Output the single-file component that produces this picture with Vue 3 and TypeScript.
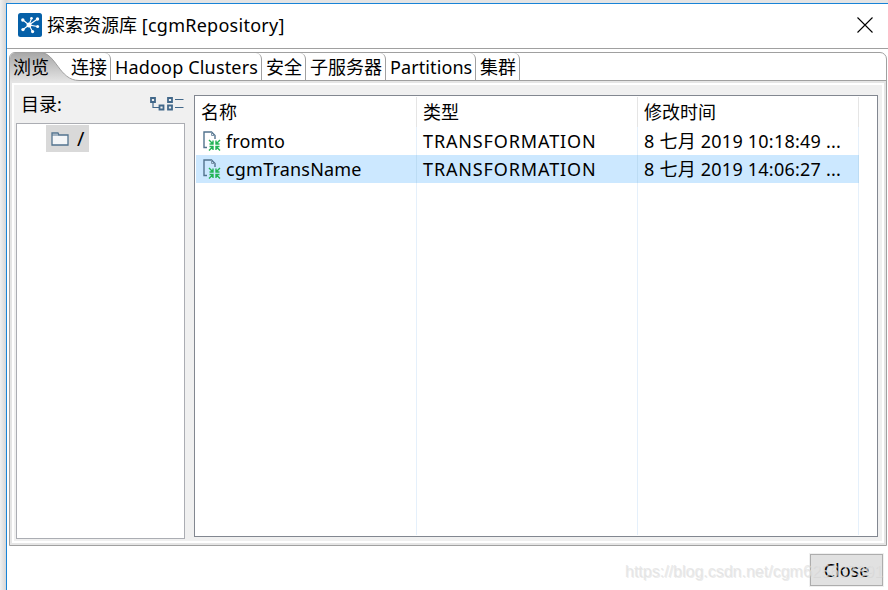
<script setup lang="ts">
interface Tab { label: string; key: string }
interface Row { name: string; type: string; modified: string; selected: boolean }

const tabs: Tab[] = [
  { label: '连接', key: 'conn' },
  { label: 'Hadoop Clusters', key: 'hadoop' },
  { label: '安全', key: 'security' },
  { label: '子服务器', key: 'slaves' },
  { label: 'Partitions', key: 'partitions' },
  { label: '集群', key: 'clusters' },
]
const rows: Row[] = [
  { name: 'fromto', type: 'TRANSFORMATION', modified: '8 七月 2019 10:18:49 ...', selected: false },
  { name: 'cgmTransName', type: 'TRANSFORMATION', modified: '8 七月 2019 14:06:27 ...', selected: true },
]
</script>

<template>
  <div class="desktop">
    <div class="window">
      <header class="titlebar">
        <svg class="logo" viewBox="0 0 24 24">
          <rect width="24" height="24" rx="2.5" fill="#0560a8" />
          <g stroke="#fff" stroke-width="1.1" fill="#fff">
            <path d="M11 12L5 7M11 12L13.500 5.500M11 12L19.500 6M11 12L5 16.500M11 12L14.500 18.500M11 12L19.500 13.500" />
            <g stroke="none">
              <circle cx="11" cy="12" r="2.5" /><circle cx="4.800" cy="7" r="1.700" /><circle cx="13.500" cy="5.300" r="1.300" />
              <circle cx="19.500" cy="6" r="1.700" /><circle cx="5" cy="16.600" r="1.700" /><circle cx="14.600" cy="18.600" r="1.600" />
              <circle cx="19.600" cy="13.600" r="1.500" />
            </g>
          </g>
        </svg>
        <h1 class="title">探索资源库 <span class="latin">[cgmRepository]</span></h1>
        <svg class="close-x" viewBox="0 0 16 16"><path d="M.5.5l15 15M15.5.5l-15 15" stroke="#000" stroke-width="1.1" /></svg>
      </header>
      <main class="folder">
        <nav class="tabs">
          <div class="tab-active">
            <svg class="tab-shape" viewBox="0 0 102 30">
              <defs>
                <linearGradient id="tabFill" x1="0" y1="0" x2="0" y2="1">
                  <stop offset="0" stop-color="#a6a6a6" /><stop offset="1" stop-color="#e5e5e5" />
                </linearGradient>
              </defs>
              <path d="M0 30V5Q0 0 5 0H31C47 0 50 28.500 70 28.500H102V30Z" fill="url(#tabFill)" />
              <path d="M0 .5H31C47 .5 50 28.500 70 28.500H102" fill="none" stroke="#a0a0a0" />
            </svg>
            <span class="tab-label">浏览</span>
          </div>
          <div v-for="t in tabs" :key="t.key" class="tab" :class="t.key">{{ t.label }}</div>
          <div class="tab-rest"></div>
        </nav>
        <div class="band">
          <div class="content">
            <aside class="side">
              <div class="side-head">
                <span>目录:</span>
                <svg class="tools" viewBox="0 0 34 14" fill="none" stroke="#42688a" stroke-width="1.8">
                  <path d="M1 1h4v4h-4zM9.500 8.500h4v4h-4zM18 1h4v4h-4zM18 8.500h4v4h-4z" />
                  <path d="M3 5v5.500h6M25 2.500h8.500M25 10.500h8.500" stroke-width="1.2" />
                </svg>
              </div>
              <div class="tree">
                <div class="node">
                  <svg class="dir" viewBox="0 0 18 14"><path d="M1 1h6l1 2h9v10H1z" fill="#f4f6f8" stroke="#52738e" stroke-width="1.3" /><path d="M1 3h7" stroke="#52738e" /></svg>
                  <span class="slash">/</span>
                </div>
              </div>
            </aside>
            <section class="table">
              <div class="line head"><div class="cell">名称</div><div class="cell">类型</div><div class="cell">修改时间</div></div>
              <div v-for="r in rows" :key="r.name" class="line" :class="{ selected: r.selected }">
                <div class="cell">
                  <svg class="doc" viewBox="0 0 18 20" fill="none">
                    <path d="M4 16.500H1V1h7.500l3.500 3.500V8" stroke="#52738e" stroke-width="1.4" /><path d="M8.500 1v3.500H12" stroke="#7d96ab" />
                    <path d="M6 9l4 4M17 9l-4 4M6 19.500l4-4M17 19.500l-4-4M10 9.500V13H6.500M13 9.500V13h3.500M10 19v-3.500H6.500M13 19v-3.500h3.500" stroke="#22b455" stroke-width="1.4" />
                  </svg>
                  <span :class="r.selected ? 'name-b' : 'name-a'">{{ r.name }}</span>
                </div>
                <div class="cell type">{{ r.type }}</div>
                <div class="cell date">{{ r.modified }}</div>
              </div>
              <div class="line filler"><div class="cell"></div><div class="cell"></div><div class="cell"></div></div>
            </section>
          </div>
        </div>
      </main>
      <footer class="footer"><button class="close-btn">Close</button></footer>
    </div>
    <div class="watermark">https://blog.csdn.net/cgm625637391</div>
  </div>
</template>

<style>
body { margin: 0; overflow: hidden; }
</style>
<style scoped>
* { box-sizing: border-box; }
.desktop { position: relative; width: 888px; height: 590px; padding: 3px 0 0 6px; background: linear-gradient(90deg, #f0f0f0 0, #d6d6d6 6px, #e4e4e4 12px); font: 18px/28px "Noto Sans", "Noto Sans CJK SC", sans-serif; color: #000; white-space: pre; overflow: hidden; }
.window { height: 587px; display: flex; flex-direction: column; background: #fff; border-left: 1px solid #1883d7; border-top: 1px solid #1883d7; }
.titlebar { height: 45px; flex: none; display: flex; align-items: center; padding: 0 15px 2px 11px; border-bottom: 1px solid #a0a0a0; }
.logo { width: 24px; height: 24px; }
.title { margin: 0 0 0 5px; font-size: 18px; font-weight: 400; flex: 1; }
.latin { letter-spacing: .27px; }
.close-x { width: 16px; height: 16px; }
.folder { margin: 3px 1px 0 2px; height: 494px; flex: none; display: flex; flex-direction: column; border: 1px solid #a0a0a0; border-radius: 6px 7px 0 0; overflow: hidden; }
.tabs { height: 28px; flex: none; display: flex; }
.tab-active { position: relative; width: 57px; flex: none; }
.tab-shape { position: absolute; left: -1px; top: -1px; width: 102px; height: 30px; z-index: 1; }
.tab-label { position: relative; z-index: 2; margin-left: 3px; line-height: 28px; }
.tab { border-right: 1px solid #a0a0a0; border-bottom: 1px solid #a0a0a0; border-top-right-radius: 6px; padding-left: 4px; line-height: 28px; flex: none; position: relative; z-index: 2; }
.conn { width: 44px; border-bottom: 0; }
.hadoop { width: 151px; letter-spacing: .17px; }
.security { width: 44px; }
.slaves { width: 80px; }
.partitions { width: 90px; letter-spacing: .1px; }
.clusters { width: 44px; }
.tab-rest { flex: 1; border-bottom: 1px solid #a0a0a0; }
.band { flex: 1; min-height: 0; padding: 2px; background: #e5e5e5; }
.content { height: 100%; display: flex; border: 2px solid #fff; background: #f0f0f0; padding: 10px 4px 2px 2px; }
.side { width: 169px; display: flex; flex-direction: column; margin-right: 9px; }
.side-head { height: 28px; flex: none; display: flex; justify-content: space-between; padding: 0 1px 0 5px; line-height: 18px; }
.tools { width: 34px; height: 14px; margin-top: 2px; }
.tree { flex: 1; background: #fff; border: 1px solid #abadb3; padding: 1px 0 0 29px; }
.node { width: 43px; height: 27px; background: #d9d9d9; display: flex; align-items: center; padding-left: 5px; }
.dir { width: 18px; height: 14px; margin-right: 8px; }
.slash { font-size: 20px; }
.table { flex: 1; height: 442px; background: #fff; border: 1px solid #828790; padding: 1px; display: flex; flex-direction: column; }
.line { display: grid; grid-template-columns: 221px 221px 221px; width: 663px; height: 28px; flex: none; }
.cell { display: flex; align-items: center; padding-left: 6px; border-right: 1px solid #e5f0fb; }
.cell:first-child { padding-left: 5px; }
.name-b { letter-spacing: .2px; }
.name-a { letter-spacing: .1px; }
.type { letter-spacing: .87px; }
.date { letter-spacing: .23px; }
.head { height: 30px; }
.head .cell { border-right-color: #e5e5e5; }
.selected { background: #cce8ff; }
.selected .cell { border-right-color: #bcdcf4; }
.filler { flex: 1; }
.doc { width: 18px; height: 20px; margin: 0 5px 0 2px; }
.footer { display: flex; justify-content: flex-end; padding: 8px 5px 0 0; }
.close-btn { width: 73px; height: 32px; border: 1px solid #adadad; outline: 1px solid #f0f0f0; background: #e1e1e1; padding: 0 0 1px; font: inherit; color: #000; }
.watermark { position: absolute; left: 625px; top: 558px; font: 16px/28px "Liberation Sans", sans-serif; color: rgba(225,225,225,.75); text-shadow: 1px 1px 0 rgba(200,200,200,.35); }
</style>
